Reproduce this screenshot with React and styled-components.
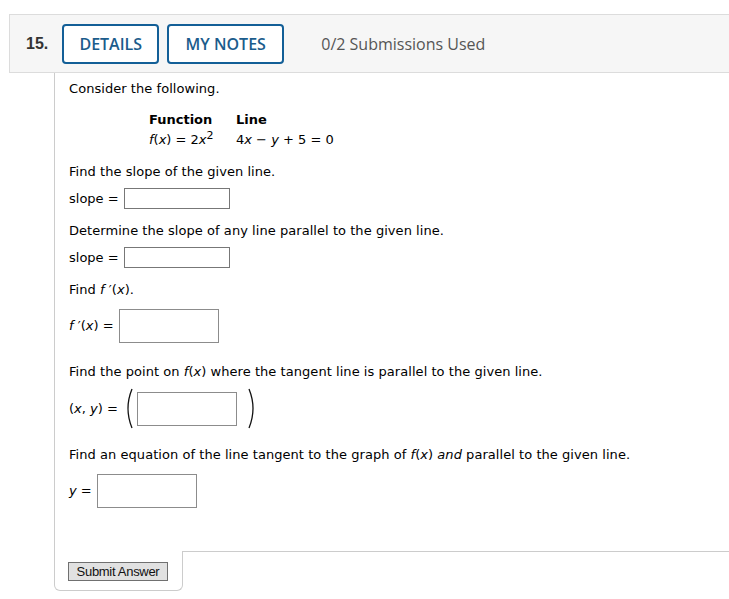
import styled, { createGlobalStyle } from "styled-components";

const GlobalStyle = createGlobalStyle`
  html, body {
    margin: 0;
    padding: 0;
    background: #fff;
  }
  body {
    font-family: "DejaVu Sans", Verdana, sans-serif;
    font-size: 13px;
    color: #000;
    overflow: hidden;
  }
`;

function Paren({ side }) {
  const d = side === "left" ? "M9 1 Q1 20.5 9 40" : "M1 1 Q9 20.5 1 40";
  return (
    <svg width="10" height="41" viewBox="0 0 10 41">
      <path d={d} fill="none" stroke="#111" strokeWidth="1.3" />
    </svg>
  );
}

function App() {
  return (
    <Page>
      <GlobalStyle />
      <Header>
        <Number>15.</Number>
        <TabButton $width={97}>DETAILS</TabButton>
        <TabButton $width={117}>MY NOTES</TabButton>
        <Submissions>0/2 Submissions Used</Submissions>
      </Header>
      <Question>
        <Body>
          <Text>Consider the following.</Text>
          <Given>
            <GivenRow>
              <GivenHead>Function</GivenHead>
              <GivenHead>Line</GivenHead>
            </GivenRow>
            <GivenRow>
              <GivenCell>
                <i>f</i>(<i>x</i>) = 2<i>x</i>
                <sup>2</sup>
              </GivenCell>
              <GivenCell>
                4<i>x</i> − <i>y</i> + 5 = 0
              </GivenCell>
            </GivenRow>
          </Given>

          <Text $top={16}>Find the slope of the given line.</Text>
          <AnswerRow $top={8}>
            <span>slope =</span>
            <Input $size="small" />
          </AnswerRow>

          <Text $top={14}>Determine the slope of any line parallel to the given line.</Text>
          <AnswerRow $top={8}>
            <span>slope =</span>
            <Input $size="small" />
          </AnswerRow>

          <Text $top={14}>
            Find <i>f</i> ′(<i>x</i>).
          </Text>
          <AnswerRow $top={11}>
            <span>
              <i>f</i> ′(<i>x</i>) =
            </span>
            <Input />
          </AnswerRow>

          <Text $top={21}>
            Find the point on <i>f</i>(<i>x</i>) where the tangent line is parallel to the given line.
          </Text>
          <AnswerRow $top={8}>
            <span>
              (<i>x</i>, <i>y</i>) =
            </span>
            <Paren side="left" />
            <Input $gap={11} />
            <Paren side="right" />
          </AnswerRow>

          <Text $top={18}>
            Find an equation of the line tangent to the graph of <i>f</i>(<i>x</i>) <i>and</i> parallel
            to the given line.
          </Text>
          <AnswerRow $top={11}>
            <span>
              <i>y</i> =
            </span>
            <Input />
          </AnswerRow>
        </Body>
        <Footer>
          <SubmitTab>
            <SubmitButton>Submit Answer</SubmitButton>
          </SubmitTab>
          <FooterRest />
        </Footer>
      </Question>
    </Page>
  );
}

const Page = styled.div`
  padding: 14px 0 0 9px;
`;

const Header = styled.div`
  display: flex;
  align-items: center;
  height: 57px;
  padding-left: 16px;
  background: #f6f6f6;
  border: 1px solid #dcdcdc;
  border-right: none;
`;

const Number = styled.span`
  font-family: "Liberation Sans", Arial, sans-serif;
  font-weight: bold;
  font-size: 16px;
  color: #333;
  margin-right: 14px;
`;

const TabButton = styled.button`
  box-sizing: border-box;
  width: ${(p) => p.$width}px;
  height: 40px;
  padding: 0;
  margin-right: 8px;
  background: #fff;
  border: 2px solid #135f97;
  border-radius: 4px;
  font-family: "Open Sans", sans-serif;
  font-size: 16px;
  font-weight: 600;
  color: #1b5c8c;
  cursor: pointer;
`;

const Submissions = styled.span`
  margin-left: 29px;
  font-family: "Open Sans", sans-serif;
  font-size: 16px;
  color: #555;
`;

const Question = styled.div`
  margin-left: 45px;
`;

const Body = styled.div`
  border-left: 1px solid #ccc;
  padding: 8px 0 43px 14px;
`;

const Text = styled.div`
  line-height: 16px;
  letter-spacing: 0.05px;
  margin-top: ${(p) => p.$top || 0}px;
`;

const Given = styled.div`
  margin: 15px 0 0 80px;
`;

const GivenRow = styled.div`
  display: flex;
  height: 16px;
  line-height: 16px;
  & + & {
    margin-top: 4px;
  }
  sup {
    font-size: 11px;
    line-height: 0;
    vertical-align: 5px;
  }
`;

const GivenHead = styled.span`
  font-weight: bold;
  width: 87px;
`;

const GivenCell = styled.span`
  width: 87px;
  white-space: nowrap;
`;

const AnswerRow = styled.div`
  display: flex;
  align-items: center;
  gap: 5px;
  margin-top: ${(p) => p.$top || 0}px;
  line-height: 16px;
`;

const Input = styled.div`
  box-sizing: border-box;
  width: ${(p) => (p.$size === "small" ? 106 : 100)}px;
  height: ${(p) => (p.$size === "small" ? 21 : 34)}px;
  border: 1px solid ${(p) => (p.$size === "small" ? "#777" : "#8c8c8c")};
  background: #fff;
  margin-left: ${(p) => (p.$gap ? -1 : 0)}px;
  margin-right: ${(p) => (p.$gap ? p.$gap - 5 : 0)}px;
`;

const Footer = styled.div`
  display: flex;
  align-items: flex-start;
`;

const SubmitTab = styled.div`
  width: 129px;
  height: 40px;
  padding: 11px 0 0 13px;
  box-sizing: border-box;
  border: 1px solid #ccc;
  border-top: none;
  border-radius: 0 0 6px 6px;
`;

const FooterRest = styled.div`
  flex: 1;
  border-top: 1px solid #ccc;
  margin-left: -1px;
`;

const SubmitButton = styled.button`
  height: 19px;
  width: 100px;
  padding: 0;
  background: #e1e1e1;
  border: 1px solid #707070;
  font-family: "Liberation Sans", Arial, sans-serif;
  font-size: 13px;
  color: #111;
  letter-spacing: -0.3px;
`;

export default App;
